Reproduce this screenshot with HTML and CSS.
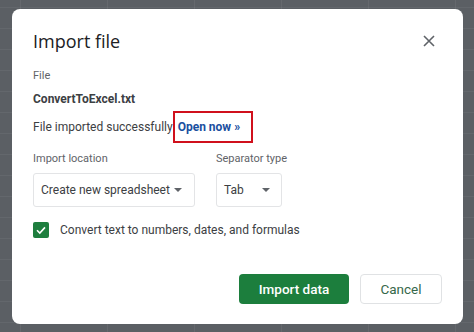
FILE: index.html
```html
<!DOCTYPE html>
<html lang="en">
<head>
    <meta charset="UTF-8">
    <meta name="viewport" content="width=device-width, initial-scale=1.0">
    <title>Import file</title>
    <link rel="stylesheet" href="styles.css">
</head>
<body>
<div class="dialog">
    <!-- Header -->
    <div class="dialog-head">
        <div class="title">Import file</div>
        <svg class="close" width="12" height="12" viewBox="0 0 12 12">
            <path d="M1 1L11 11M11 1L1 11" stroke="#5f6368" stroke-width="1.6" fill="none"/>
        </svg>
    </div>

    <!-- File info -->
    <div class="label">File</div>
    <div class="file-name">ConvertToExcel.txt</div>
    <div class="status">
        <span>File imported successfully</span><a class="open-link" href="#">Open now »</a>
    </div>

    <!-- Options -->
    <div class="options">
        <div class="option">
            <div class="label">Import location</div>
            <div class="select wide">
                <span>Create new spreadsheet</span>
                <span class="caret"></span>
            </div>
        </div>
        <div class="option">
            <div class="label">Separator type</div>
            <div class="select narrow">
                <span>Tab</span>
                <span class="caret"></span>
            </div>
        </div>
    </div>

    <div class="check-row">
        <span class="checkbox">
            <svg width="12" height="12" viewBox="0 0 12 12">
                <path d="M2 6.2L4.8 9L10 3.4" stroke="#fff" stroke-width="1.6" fill="none"/>
            </svg>
        </span>
        <span>Convert text to numbers, dates, and formulas</span>
    </div>

    <!-- Buttons -->
    <div class="actions">
        <button class="btn primary">Import data</button>
        <button class="btn secondary">Cancel</button>
    </div>
</div>
</body>
</html>
```

FILE: styles.css
```css
/* Global styles */
* {
    margin: 0;
    padding: 0;
    box-sizing: border-box;
}

body {
    font-family: Roboto, Arial, sans-serif;
    background-color: #5b5f64;
    background-image:
        linear-gradient(90deg, rgba(255, 255, 255, 0.06) 1px, transparent 1px),
        linear-gradient(0deg, rgba(255, 255, 255, 0.05) 1px, transparent 1px);
    background-size: 87px 100%, 100% 21px;
    background-position: 20px 0, 0 8px;
    width: 474px;
    height: 332px;
    overflow: hidden;
    padding: 9px 11px 8px 12px;
}

/* Dialog */
.dialog {
    width: 451px;
    height: 315px;
    background-color: white;
    border-radius: 8px;
    padding: 20px 21px 20px 21px;
    display: flex;
    flex-direction: column;
    color: #3c4043;
}

.dialog-head {
    display: flex;
    justify-content: space-between;
    align-items: center;
    margin-bottom: 16px;
}

.title {
    font-family: "Open Sans", Roboto, sans-serif;
    font-size: 18px;
    line-height: 24px;
    color: #202124;
}

.close {
    margin-right: 7px;
}

.label {
    font-size: 11px;
    line-height: 14px;
    color: #5f6368;
}

.file-name {
    font-size: 12px;
    font-weight: bold;
    line-height: 16px;
    margin-top: 8px;
}

.status {
    display: flex;
    align-items: center;
    font-size: 12px;
    margin-top: 4px;
}

.open-link {
    display: inline-block;
    color: #1a4fa0;
    font-weight: bold;
    text-decoration: none;
    border: 2px solid #d0101c;
    padding: 7px 11px 7px 3px;
}

/* Options */
.options {
    display: flex;
    gap: 21px;
    margin-top: 9px;
}

.option .label {
    margin-bottom: 7px;
}

.select {
    display: flex;
    align-items: center;
    justify-content: space-between;
    height: 34px;
    border: 1px solid #e3e4e6;
    border-radius: 3px;
    padding: 0 12px 0 7px;
    font-size: 12px;
    white-space: nowrap;
    color: #3c4043;
}

.select.wide {
    width: 162px;
}

.select.narrow {
    width: 66px;
    padding-right: 11px;
}

.caret {
    width: 0;
    height: 0;
    border-left: 4px solid transparent;
    border-right: 4px solid transparent;
    border-top: 4px solid #5f6368;
}

/* Checkbox row */
.check-row {
    display: flex;
    align-items: center;
    gap: 11px;
    margin-top: 15px;
    font-size: 12px;
}

.checkbox {
    width: 16px;
    height: 16px;
    background-color: #1e7e3e;
    border-radius: 2px;
    display: flex;
    align-items: center;
    justify-content: center;
}

/* Buttons */
.actions {
    margin-top: auto;
    display: flex;
    justify-content: flex-end;
    gap: 11px;
}

.btn {
    height: 30px;
    border-radius: 4px;
    font-family: Roboto, Arial, sans-serif;
    font-size: 13.5px;
    font-weight: 500;
    cursor: pointer;
}

.primary {
    width: 110px;
    background-color: #1c7e3d;
    color: white;
    border: none;
}

.secondary {
    width: 82px;
    background-color: white;
    color: #36684a;
    border: 1px solid #e0e2e4;
    font-weight: 400;
}
```
